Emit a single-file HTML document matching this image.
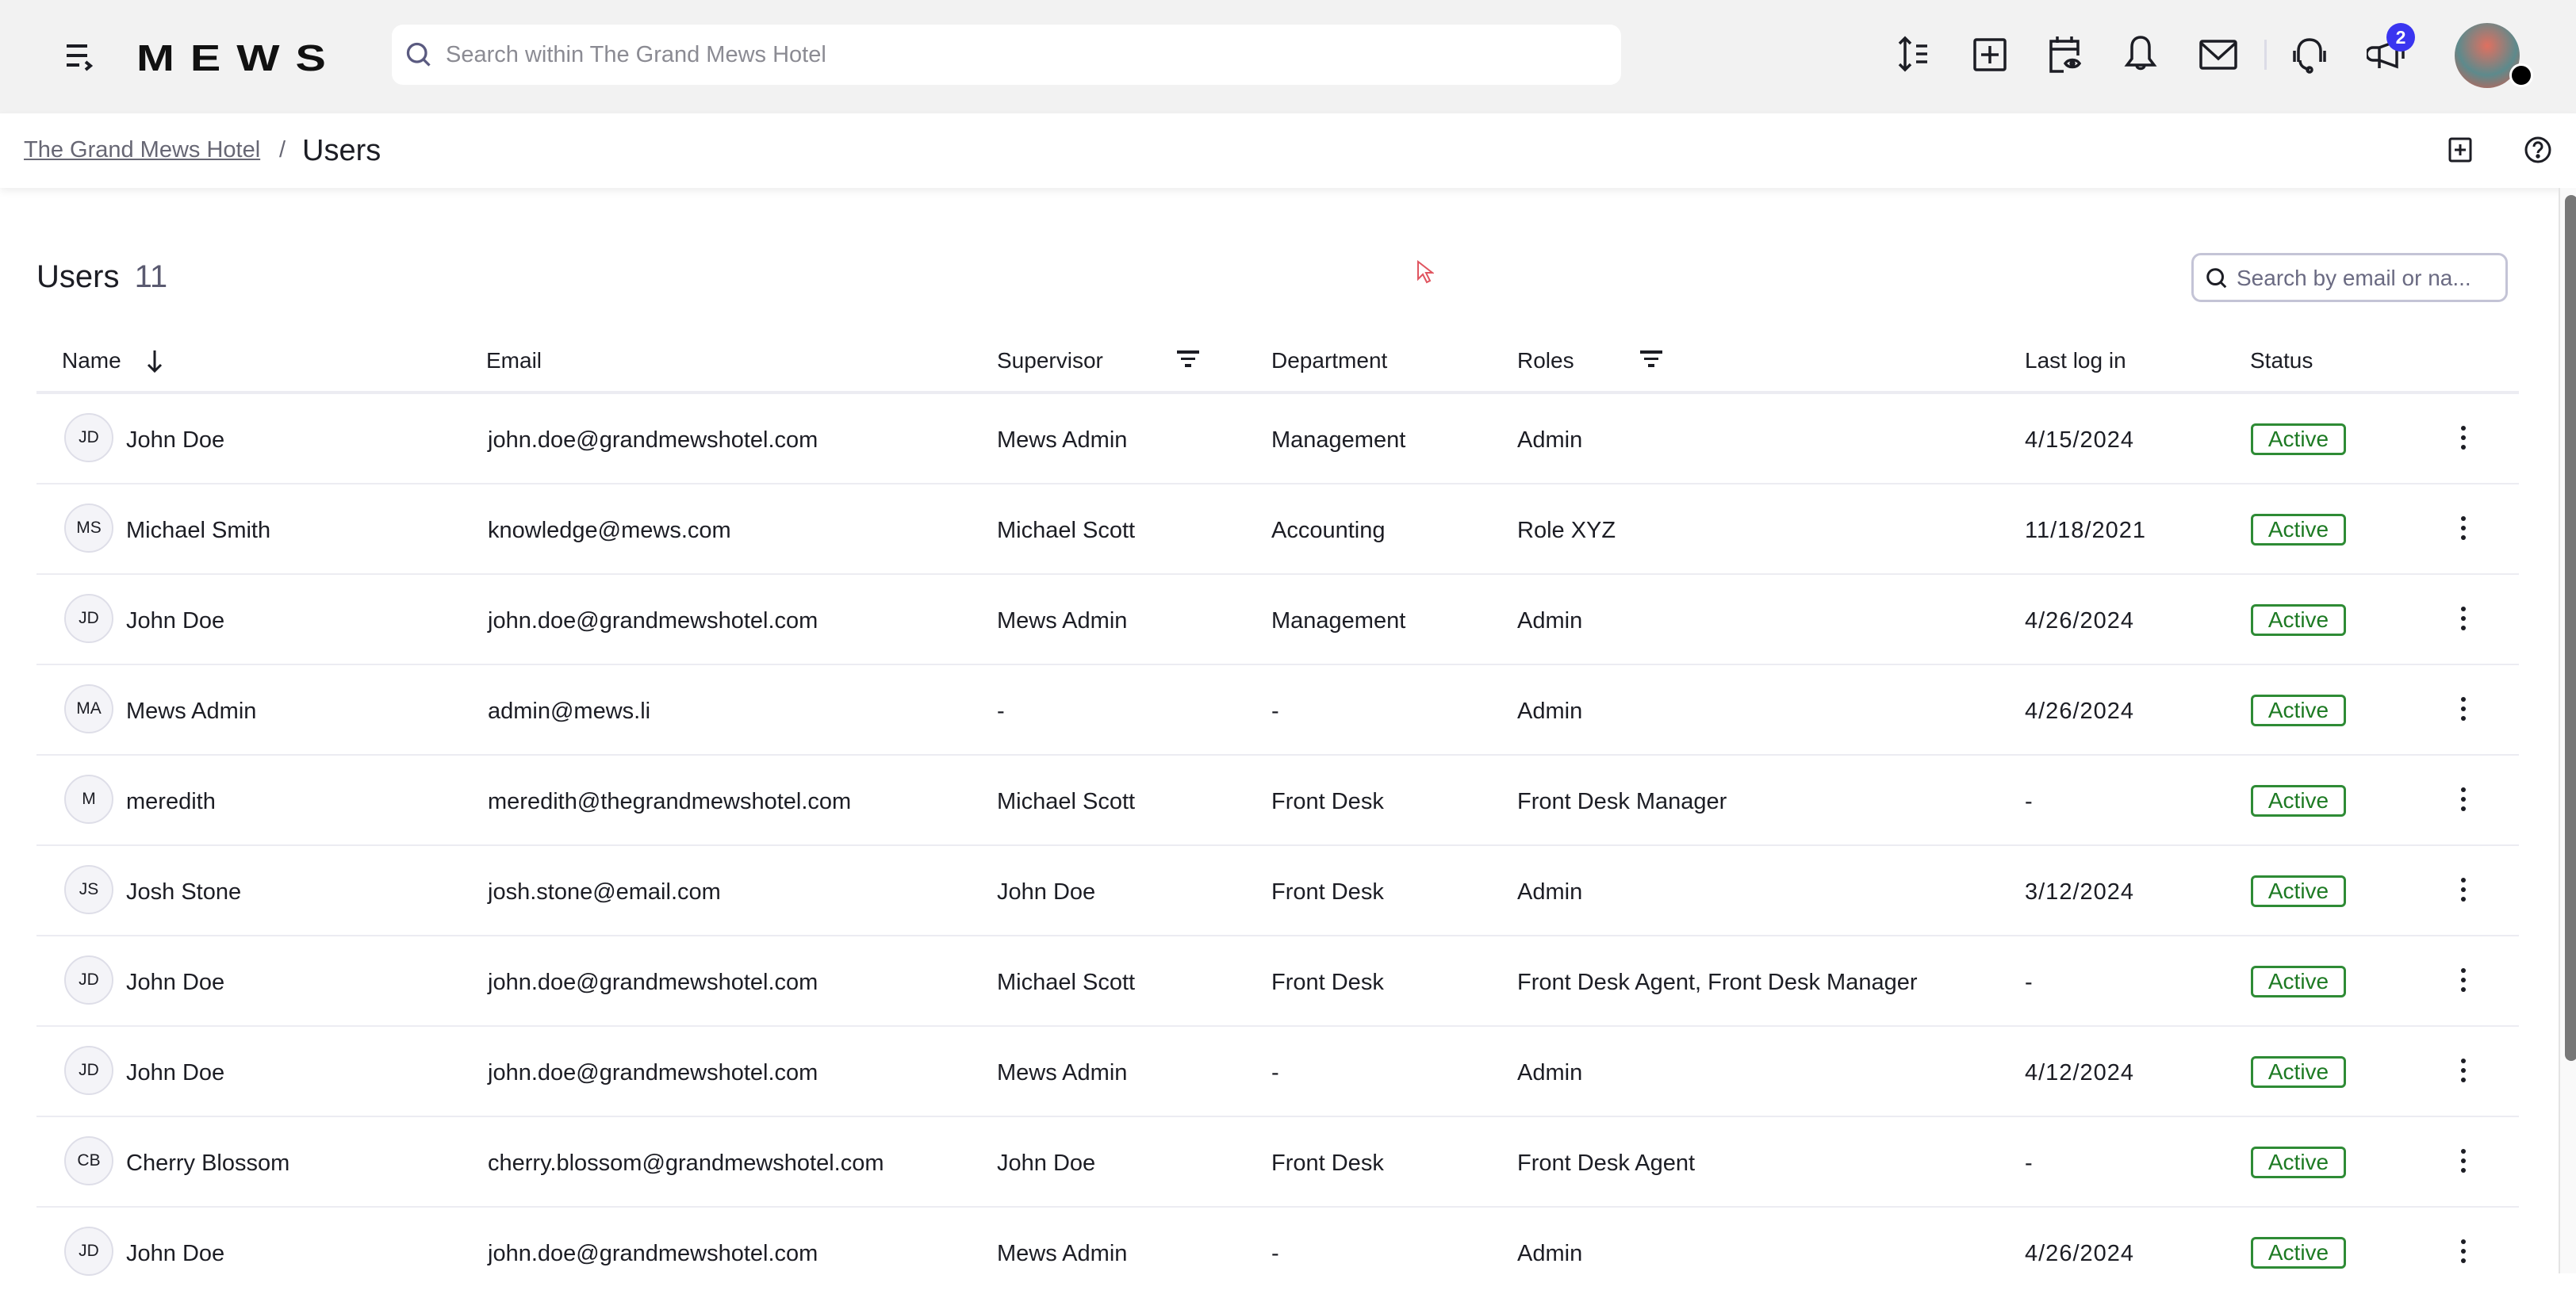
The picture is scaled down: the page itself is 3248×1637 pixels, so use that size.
<!DOCTYPE html>
<html><head><meta charset="utf-8"><style>
*{box-sizing:border-box;margin:0;padding:0}
body{width:3248px;height:1606px;overflow:hidden;background:#fff;font-family:"Liberation Sans",sans-serif;color:#1c1d24;position:relative}
.top{position:absolute;left:0;top:0;width:3248px;height:143px;background:#f2f2f2}
.search{position:absolute;left:494px;top:31px;width:1550px;height:76px;background:#fff;border-radius:14px}
.search span{position:absolute;left:68px;top:22px;font-size:29px;color:#8b8b93}
.crumb{position:absolute;left:0;top:143px;width:3248px;height:94px;background:#fff;box-shadow:0 4px 10px rgba(0,0,0,.07)}
.ic{position:absolute}
.abs{position:absolute;white-space:nowrap}
.hd{font-size:28px;color:#1c1d24;top:439px}
.row{position:absolute;left:46px;width:3130px;height:114px;border-bottom:2px solid #ececf2}
.row div{position:absolute;top:42px;font-size:29px;white-space:nowrap}
.av{left:35px !important;top:24px !important;width:62px;height:62px;border-radius:50%;background:#f4f4f8;border:2px solid #dedee8;font-size:21px !important;text-align:center;line-height:58px}
.badge{left:2792px !important;top:37px !important;width:120px;height:40px;border:3px solid #2e8b35;border-radius:6px;color:#1d7a23;font-size:28px !important;text-align:center;line-height:34px}
.keb{left:3057px !important;top:40px !important;width:6px}
.keb i{display:block;width:6px;height:6px;border-radius:50%;background:#1c1d24;margin-bottom:6px}
.dt{letter-spacing:1px}
</style></head><body>
<div class="top">
 <svg class="ic" style="left:82px;top:54px" width="40" height="36" viewBox="0 0 40 36" fill="none" stroke="#1c1d24" stroke-width="4"><path d="M2 4h26M2 16h26M2 28h16M26 24l6 5-6 5"/></svg>
 <div class="abs" style="left:172px;top:46px;font-size:46px;font-weight:bold;letter-spacing:16px;color:#111;transform:scaleX(1.25);transform-origin:left">MEWS</div>
 <div class="search"><svg class="ic" style="left:16px;top:20px" width="36" height="36" viewBox="0 0 24 24" fill="none" stroke="#5a5a80" stroke-width="2.2"><circle cx="10.5" cy="10.5" r="7.5"/><path d="M16 16l5 5"/></svg><span>Search within The Grand Mews Hotel</span></div>
 <svg class="ic" style="left:2390px;top:44px" width="48" height="48" viewBox="0 0 48 48" fill="none" stroke="#1c1d24" stroke-width="3.5"><path d="M12 4v40M5 11l7-7 7 7M5 37l7 7 7-7M26 14h14M26 24h14M26 34h14"/></svg>
 <svg class="ic" style="left:2488px;top:48px" width="42" height="42" viewBox="0 0 42 42" fill="none" stroke="#1c1d24" stroke-width="3.5"><rect x="2" y="2" width="38" height="38" rx="2"/><path d="M21 10v22M10 21h22"/></svg>
 <svg class="ic" style="left:2582px;top:44px" width="46" height="50" viewBox="0 0 46 50" fill="none" stroke="#1c1d24" stroke-width="3.5"><path d="M20 46H4V8h34v18M4 18h34M12 2v8M30 2v8"/><path d="M22 36c4-6 14-6 18 0-4 6-14 6-18 0z"/><circle cx="31" cy="36" r="2"/></svg>
 <svg class="ic" style="left:2678px;top:44px" width="42" height="50" viewBox="0 0 42 50" fill="none" stroke="#1c1d24" stroke-width="3.5"><path d="M21 3c-7 0-11 5-11 12v15l-6 8h34l-6-8V15c0-7-4-12-11-12zM16 38c0 6 10 6 10 0"/></svg>
 <svg class="ic" style="left:2773px;top:50px" width="48" height="38" viewBox="0 0 48 38" fill="none" stroke="#1c1d24" stroke-width="3.5"><rect x="2" y="2" width="44" height="34" rx="2"/><path d="M2 4l22 20L46 4"/></svg>
 <div class="abs" style="left:2855px;top:50px;width:3px;height:38px;background:#dcdce6"></div>
 <svg class="ic" style="left:2890px;top:46px" width="44" height="48" viewBox="0 0 44 48" fill="none" stroke="#1c1d24" stroke-width="3.5"><path d="M8 32V18C8 9 14 4 22 4s14 5 14 14v14M3 18v14M41 18v14M10 30c0 8 6 10 12 12"/><circle cx="22" cy="42" r="3"/></svg>
 <svg class="ic" style="left:2984px;top:48px" width="50" height="44" viewBox="0 0 50 44" fill="none" stroke="#1c1d24" stroke-width="3.5"><path d="M8 12h8l22-8v32l-22-8H8a6 6 0 0 1 0-16zM16 12v26M46 14v12"/></svg>
 <div class="abs" style="left:3009px;top:29px;width:36px;height:36px;border-radius:50%;background:#3a35f0;color:#fff;font-weight:bold;font-size:23px;text-align:center;line-height:36px">2</div>
 <div class="abs" style="left:3095px;top:29px;width:82px;height:82px;border-radius:50%;background:radial-gradient(circle at 50% 35%,#e07060,#5d8a8c 55%,#b06a60 85%)"></div>
 <div class="abs" style="left:3164px;top:80px;width:30px;height:30px;border-radius:50%;background:#000;border:3px solid #fff"></div>
</div>
<div class="crumb">
 <div class="abs" style="left:30px;top:30px;font-size:29px;color:#676774;text-decoration:underline">The Grand Mews Hotel</div>
 <div class="abs" style="left:352px;top:30px;font-size:29px;color:#676774">/</div>
 <div class="abs" style="left:381px;top:26px;font-size:38px;color:#1c1d24">Users</div>
 <svg class="ic" style="left:3087px;top:30px" width="30" height="32" viewBox="0 0 30 32" fill="none" stroke="#1c1d24" stroke-width="3"><rect x="2" y="2" width="26" height="28" rx="2"/><path d="M15 9v14M8 16h14"/></svg>
 <svg class="ic" style="left:3182px;top:28px" width="36" height="36" viewBox="0 0 36 36" fill="none" stroke="#1c1d24" stroke-width="3"><circle cx="18" cy="18" r="15"/><path d="M13 14c0-7 10-7 10 0 0 4-5 4-5 8"/><circle cx="18" cy="26" r="1.2" fill="#1c1d24"/></svg>
</div>
<div class="abs" style="left:46px;top:327px;font-size:40px;color:#1c1d24">Users <span style="color:#5a5a70;margin-left:8px">11</span></div>
<div class="abs" style="left:2763px;top:319px;width:399px;height:62px;border:3px solid #c4c4d6;border-radius:12px">
 <svg class="ic" style="left:14px;top:14px" width="30" height="30" viewBox="0 0 24 24" fill="none" stroke="#1c1d24" stroke-width="2.4"><circle cx="10.5" cy="10.5" r="7.5"/><path d="M16 16l5 5"/></svg>
 <span class="abs" style="left:54px;top:13px;font-size:28px;color:#6a6a82">Search by email or na...</span></div>
<div class="abs hd" style="left:78px">Name</div>
<svg class="ic" style="left:184px;top:440px" width="22" height="32" viewBox="0 0 22 32" fill="none" stroke="#1c1d24" stroke-width="3"><path d="M11 2v26M3 20l8 8 8-8"/></svg>
<div class="abs hd" style="left:613px">Email</div>
<div class="abs hd" style="left:1257px">Supervisor</div>
<svg class="ic" style="left:1484px;top:442px" width="28" height="22" viewBox="0 0 28 22"><rect x="0" y="0" width="28" height="4" fill="#1c1d24"/><rect x="5" y="9" width="18" height="3" fill="#1c1d24"/><rect x="10" y="17" width="8" height="4" fill="#1c1d24"/></svg>
<div class="abs hd" style="left:1603px">Department</div>
<div class="abs hd" style="left:1913px">Roles</div>
<svg class="ic" style="left:2068px;top:442px" width="28" height="22" viewBox="0 0 28 22"><rect x="0" y="0" width="28" height="4" fill="#1c1d24"/><rect x="5" y="9" width="18" height="3" fill="#1c1d24"/><rect x="10" y="17" width="8" height="4" fill="#1c1d24"/></svg>
<div class="abs hd" style="left:2553px">Last log in</div>
<div class="abs hd" style="left:2837px">Status</div>
<div class="abs" style="left:46px;top:493px;width:3130px;height:4px;background:#ececf2"></div>

<div class="row" style="top:497px"><div class="av">JD</div><div style="left:113px">John Doe</div><div style="left:569px">john.doe@grandmewshotel.com</div><div style="left:1211px">Mews Admin</div><div style="left:1557px">Management</div><div style="left:1867px">Admin</div><div class="dt" style="left:2507px">4/15/2024</div><div class="badge">Active</div><div class="keb"><i></i><i></i><i></i></div></div>
<div class="row" style="top:611px"><div class="av">MS</div><div style="left:113px">Michael Smith</div><div style="left:569px">knowledge@mews.com</div><div style="left:1211px">Michael Scott</div><div style="left:1557px">Accounting</div><div style="left:1867px">Role XYZ</div><div class="dt" style="left:2507px">11/18/2021</div><div class="badge">Active</div><div class="keb"><i></i><i></i><i></i></div></div>
<div class="row" style="top:725px"><div class="av">JD</div><div style="left:113px">John Doe</div><div style="left:569px">john.doe@grandmewshotel.com</div><div style="left:1211px">Mews Admin</div><div style="left:1557px">Management</div><div style="left:1867px">Admin</div><div class="dt" style="left:2507px">4/26/2024</div><div class="badge">Active</div><div class="keb"><i></i><i></i><i></i></div></div>
<div class="row" style="top:839px"><div class="av">MA</div><div style="left:113px">Mews Admin</div><div style="left:569px">admin@mews.li</div><div style="left:1211px">-</div><div style="left:1557px">-</div><div style="left:1867px">Admin</div><div class="dt" style="left:2507px">4/26/2024</div><div class="badge">Active</div><div class="keb"><i></i><i></i><i></i></div></div>
<div class="row" style="top:953px"><div class="av">M</div><div style="left:113px">meredith</div><div style="left:569px">meredith@thegrandmewshotel.com</div><div style="left:1211px">Michael Scott</div><div style="left:1557px">Front Desk</div><div style="left:1867px">Front Desk Manager</div><div style="left:2507px">-</div><div class="badge">Active</div><div class="keb"><i></i><i></i><i></i></div></div>
<div class="row" style="top:1067px"><div class="av">JS</div><div style="left:113px">Josh Stone</div><div style="left:569px">josh.stone@email.com</div><div style="left:1211px">John Doe</div><div style="left:1557px">Front Desk</div><div style="left:1867px">Admin</div><div class="dt" style="left:2507px">3/12/2024</div><div class="badge">Active</div><div class="keb"><i></i><i></i><i></i></div></div>
<div class="row" style="top:1181px"><div class="av">JD</div><div style="left:113px">John Doe</div><div style="left:569px">john.doe@grandmewshotel.com</div><div style="left:1211px">Michael Scott</div><div style="left:1557px">Front Desk</div><div style="left:1867px">Front Desk Agent, Front Desk Manager</div><div style="left:2507px">-</div><div class="badge">Active</div><div class="keb"><i></i><i></i><i></i></div></div>
<div class="row" style="top:1295px"><div class="av">JD</div><div style="left:113px">John Doe</div><div style="left:569px">john.doe@grandmewshotel.com</div><div style="left:1211px">Mews Admin</div><div style="left:1557px">-</div><div style="left:1867px">Admin</div><div class="dt" style="left:2507px">4/12/2024</div><div class="badge">Active</div><div class="keb"><i></i><i></i><i></i></div></div>
<div class="row" style="top:1409px"><div class="av">CB</div><div style="left:113px">Cherry Blossom</div><div style="left:569px">cherry.blossom@grandmewshotel.com</div><div style="left:1211px">John Doe</div><div style="left:1557px">Front Desk</div><div style="left:1867px">Front Desk Agent</div><div style="left:2507px">-</div><div class="badge">Active</div><div class="keb"><i></i><i></i><i></i></div></div>
<div class="row" style="top:1523px;border:none"><div class="av">JD</div><div style="left:113px">John Doe</div><div style="left:569px">john.doe@grandmewshotel.com</div><div style="left:1211px">Mews Admin</div><div style="left:1557px">-</div><div style="left:1867px">Admin</div><div class="dt" style="left:2507px">4/26/2024</div><div class="badge">Active</div><div class="keb"><i></i><i></i><i></i></div></div>

<div class="abs" style="left:3226px;top:237px;width:22px;height:1369px;background:#f9f9f9;border-left:2px solid #e4e4e4"></div>
<div class="abs" style="left:3234px;top:246px;width:16px;height:1092px;border-radius:8px;background:#777"></div>
<svg class="ic" style="left:1786px;top:328px" width="22" height="30" viewBox="0 0 22 30" fill="#fff" stroke="#e05560" stroke-width="2"><path d="M2 2v22l6-6 5 10 4-2-5-10h8z"/></svg>
</body></html>
